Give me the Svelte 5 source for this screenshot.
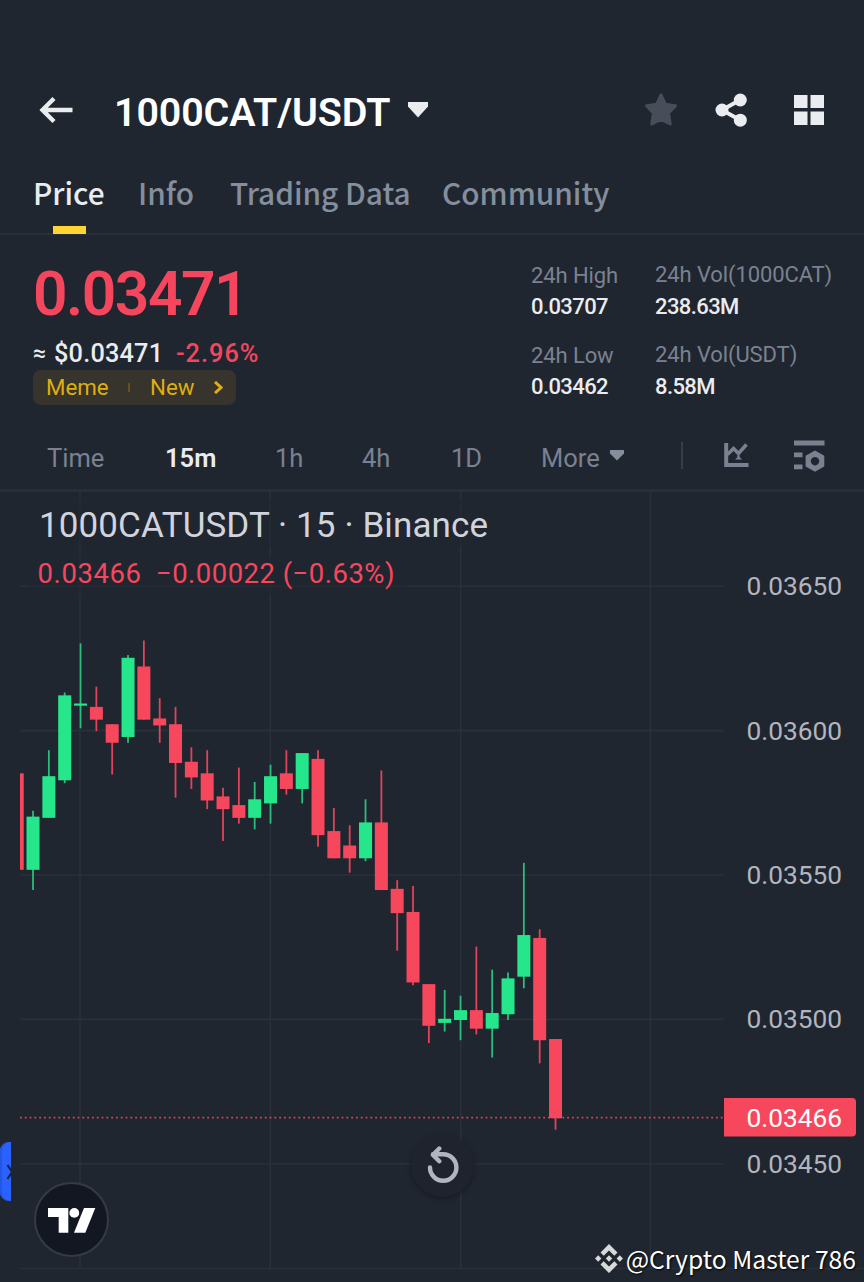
<script lang="ts">
  type Candle = [open: number, high: number, low: number, close: number]

  const tabs = ['Price', 'Info', 'Trading Data', 'Community']
  const intervals = ['Time', '15m', '1h', '4h', '1D']
  let activeTab = $state('Price')
  let activeInterval = $state('15m')

  const stats = [
    { label: '24h High', value: '0.03707' },
    { label: '24h Vol(1000CAT)', value: '238.63M' },
    { label: '24h Low', value: '0.03462' },
    { label: '24h Vol(USDT)', value: '8.58M' },
  ]

  // prices in units of 0.00001
  const candles: Candle[] = [
    [3585, 3585, 3552, 3552],
    [3552, 3572, 3545, 3570],
    [3570, 3593, 3570, 3584],
    [3583, 3613, 3582, 3612],
    [3609, 3630, 3601, 3609],
    [3608, 3615, 3600, 3604],
    [3602, 3602, 3585, 3596],
    [3598, 3626, 3596, 3625],
    [3622, 3631, 3604, 3604],
    [3604, 3611, 3596, 3602],
    [3602, 3608, 3577, 3589],
    [3589, 3594, 3580, 3584],
    [3585, 3593, 3573, 3576],
    [3577, 3580, 3562, 3573],
    [3574, 3587, 3568, 3570],
    [3570, 3582, 3566, 3576],
    [3575, 3588, 3568, 3584],
    [3585, 3593, 3578, 3580],
    [3580, 3592, 3575, 3592],
    [3590, 3593, 3560, 3564],
    [3565, 3573, 3556, 3556],
    [3560, 3567, 3551, 3556],
    [3556, 3576, 3555, 3568],
    [3568, 3586, 3545, 3545],
    [3545, 3548, 3524, 3537],
    [3537, 3546, 3512, 3513],
    [3512, 3512, 3492, 3498],
    [3499, 3510, 3496, 3500],
    [3500, 3508, 3493, 3503],
    [3503, 3525, 3495, 3497],
    [3497, 3517, 3487, 3502],
    [3502, 3516, 3500, 3514],
    [3515, 3554, 3511, 3529],
    [3528, 3531, 3485, 3493],
    [3493, 3493, 3462, 3466],
  ]
  const ticks = [3650, 3600, 3550, 3500, 3450]
  const verticals = [80, 270.3, 460.7, 650.5]
  const last = 3466

  const y = (p: number) => 94.2 + (3650 - p) * 2.888
  const fmt = (p: number) => (p / 100000).toFixed(5)

  const bars = candles.map(([open, high, low, close], i) => {
    const pad = open === close ? 1.1 : 0.6
    const top = y(Math.max(open, close)) - pad
    return {
      x: 17.2 + i * 15.833,
      up: close >= open,
      wickTop: y(high) - 0.6,
      wickBottom: y(low) + 0.6,
      top,
      height: y(Math.min(open, close)) + pad - top,
    }
  })
</script>

<div class="screen">
  <header>
    <button class="back" aria-label="Back">
      <svg width="36" height="30" viewBox="0 0 36 30" fill="none" stroke="#eaecef" stroke-width="4.4">
        <path d="M4 15H34.500M16 3.500L4.500 15L16 26.500" />
      </svg>
    </button>
    <h1>1000CAT/USDT</h1>
    <svg class="caret" width="20" height="16" viewBox="0 0 20 16" fill="#eaecef"><path d="M0 0H20V4.500L10 15.500L0 4.500Z" /></svg>
    <div class="actions">
      <svg width="34" height="36" viewBox="0 0 34 36" fill="#474d59" stroke="#474d59" stroke-width="3" stroke-linejoin="round">
        <path d="M17 3L21.400 12.300L31.500 13.700L24.600 21L26.200 32L17 27.500L7.800 32L9.400 21L2.500 13.700L12.600 12.300Z" />
      </svg>
      <svg width="34" height="36" viewBox="0 0 34 36" fill="#eaecef">
        <path d="M26 8L8 18L26 28" fill="none" stroke="#eaecef" stroke-width="4" />
        <circle cx="26.300" cy="8" r="6.500" /><circle cx="8" cy="18" r="6.500" /><circle cx="26.300" cy="28.200" r="6.500" />
      </svg>
      <svg width="30" height="30" viewBox="0 0 30 30" fill="#eaecef">
        <path d="M0 0H13.500V13H0ZM16.500 0H30V13H16.500ZM0 16.500H13.500V30H0ZM16.500 16.500H30V30H16.500Z" />
      </svg>
    </div>
  </header>

  <nav class="tabs">
    {#each tabs as tab}
      <button class:active={tab === activeTab} onclick={() => (activeTab = tab)}>{tab}</button>
    {/each}
  </nav>

  <section class="quote">
    <div class="quote-main">
      <div class="price">0.03471</div>
      <div class="fiat"><span class="approx">≈</span> <span class="usd">$0.03471</span> <span class="change">-2.96%</span></div>
      <div class="tags">
        <span class="meme">Meme</span>
        <i></i>
        <span>New</span>
        <svg width="9" height="13" viewBox="0 0 9 13" fill="none" stroke="#dfae10" stroke-width="3"><path d="M1 1L7 6.500L1 12" /></svg>
      </div>
    </div>
    <div class="stats">
      {#each stats as s}
        <div class="stat">
          <div class="label">{s.label}</div>
          <div class="value">{s.value}</div>
        </div>
      {/each}
    </div>
  </section>

  <div class="toolbar">
    {#each intervals as item}
      <button class:active={item === activeInterval} onclick={() => (activeInterval = item)}>{item}</button>
    {/each}
    <button class="more">
      More
      <svg width="14" height="11" viewBox="0 0 14 11" fill="#848e9c"><path d="M0 0H14V3.500L7 10.500L0 3.500Z" /></svg>
    </button>
    <i class="divider"></i>
    <svg class="indicator" width="25" height="26" viewBox="0 0 25 26" fill="none" stroke="#7a8190" stroke-width="4">
      <path d="M2.200 1V23H24.500" />
      <path d="M3.500 12.500L9.500 6.500L14.500 11.500L22.500 2.500" stroke-width="3.600" />
      <path d="M12.800 13.500H16.200L15.400 15L18.300 17.500H11L13.600 15Z" fill="#7a8190" stroke="none" />
    </svg>
    <svg class="settings" width="31" height="32" viewBox="0 0 31 32" fill="#7a8190">
      <path d="M0 .5H30.500V5.500H0ZM0 12.500H8.500V17.200H0ZM0 24.500H8.500V29.200H0Z" />
      <path fill-rule="evenodd" d="M21 10.500L30.300 15.800V26.500L21 31.700L11.600 26.500V15.800ZM21 17a4.200 4.200 0 1 0 .01 0Z" />
    </svg>
  </div>

  <main class="chart">
    <svg class="plot" width="864" height="790" viewBox="0 0 864 790">
      <g class="grid">
        {#each verticals as x}
          <path d="M{x} -3V776" />
        {/each}
        {#each ticks as t}
          <path d="M20 {y(t)}H724" />
        {/each}
        <path d="M20 776.500H864" />
      </g>
      <rect class="legend-bg" x="29" y="7" width="470" height="48" />
      <rect class="legend-bg" x="29" y="63" width="379" height="40" />

      <clipPath id="pane"><rect x="20" y="0" width="704" height="776" /></clipPath>
      <g clip-path="url(#pane)">
        {#each bars as b}
          <g class={b.up ? 'up' : 'down'}>
            <path d="M{b.x} {b.wickTop}V{b.wickBottom}" />
            <rect x={b.x - 6.5} y={b.top} width="13" height={b.height} />
          </g>
        {/each}
      </g>
      <path class="last-line" d="M20 {y(last)}H724" />

      <text class="symbol" x="39" y="45" textLength="449">1000CATUSDT · 15 · Binance</text>
      <text class="delta" x="37.500" y="90.500" textLength="103.500">0.03466</text>
      <text class="delta" x="156" y="90.500" textLength="238.500">−0.00022 (−0.63%)</text>

      {#each ticks as t}
        <text class="tick" x="746.500" y={y(t) + 9} textLength="95.500">{fmt(t)}</text>
      {/each}
      <path class="last-tag" d="M724 606H852a4 4 0 0 1 4 4V640.500a4 4 0 0 1 -4 4H724Z" />
      <text class="tick last" x="746.500" y={y(last) + 9} textLength="95.500">{fmt(last)}</text>
    </svg>

    <button class="drawer" aria-label="Open panel">
      <svg width="11" height="60" viewBox="0 0 11 60" fill="none">
        <path d="M7.500 23L12 30L7.500 37" stroke="#16213f" stroke-width="2" />
      </svg>
    </button>

    <div class="tv">
      <svg width="48" height="25" viewBox="0 0 48 25" fill="#fff">
        <path d="M0 0H20.300V24.700H10.700V9H0Z" /><circle cx="26.300" cy="4.900" r="4.900" /><path d="M36 0H47.300L37.300 24.700H26Z" />
      </svg>
    </div>

    <button class="reset" aria-label="Reset chart">
      <svg width="34" height="38" viewBox="0 0 34 38" fill="none" stroke="#b2b5be" stroke-width="4.400" stroke-linecap="round" stroke-linejoin="round">
        <path d="M4 21.500a13.200 13.200 0 1 0 13.200 -13.200H7" />
        <path d="M13.300 2.500L7 8.900L13.300 15.300" />
      </svg>
    </button>

    <div class="watermark">
      <svg width="28" height="29" viewBox="0 0 28 29" fill="#d8d9db">
        <path d="M14 0L22.500 8.500L19.300 11.700L14 6.400L8.700 11.700L5.500 8.500Z" />
        <path d="M14 29L22.500 20.500L19.300 17.300L14 22.600L8.700 17.300L5.500 20.500Z" />
        <path d="M14 11.300L17.200 14.500L14 17.700L10.800 14.500ZM3.200 11.300L6.400 14.500L3.200 17.700L0 14.500ZM24.800 11.300L28 14.500L24.800 17.700L21.600 14.500Z" />
      </svg>
      <span>@Crypto Master 786</span>
    </div>
  </main>
</div>

<style>
  :global(body) {
    background: #202630;
  }

  .screen {
    width: 864px;
    height: 1282px;
    overflow: hidden;
    box-sizing: border-box;
    padding-top: 72px;
    background: #202630;
    color: #eaecef;
    font-family: Roboto, 'Liberation Sans', sans-serif;
  }

  button {
    padding: 0;
    border: 0;
    background: none;
    color: inherit;
    font: inherit;
    text-align: left;
  }

  svg {
    display: block;
    flex: none;
  }

  header {
    display: flex;
    align-items: center;
    height: 76px;
    padding: 0 40px 0 38px;
  }

  .back {
    width: 76px;
  }

  h1 {
    width: 294px;
    margin: 0;
    padding-top: 5px;
    color: #fff;
    font-size: 39.4px;
    font-weight: 600;
    line-height: 46px;
    letter-spacing: -0.1px;
    white-space: nowrap;
  }

  .actions {
    display: flex;
    align-items: center;
    margin-left: auto;
  }

  .actions svg:nth-child(2) {
    margin: 0 46px 0 36px;
  }

  .tabs {
    display: grid;
    grid-template-columns: 105px 92px 212px auto;
    height: 85px;
    padding-left: 33px;
    border-bottom: 2px solid #2a3039;
  }

  .tabs button {
    position: relative;
    height: 85px;
    color: #848e9c;
    font-family: 'Noto Sans CJK SC', 'Noto Sans', sans-serif;
    font-size: 29.8px;
    font-weight: 500;
    line-height: 88px;
    letter-spacing: 0;
    white-space: nowrap;
  }

  .tabs .active {
    color: #eaecef;
  }

  .tabs .active::after {
    content: '';
    position: absolute;
    left: 20px;
    bottom: -1px;
    width: 33px;
    height: 8px;
    background: #fcd535;
  }

  .quote {
    display: flex;
    justify-content: space-between;
    height: 190px;
  }

  .quote-main {
    padding: 28px 0 0 33px;
  }

  .price {
    color: #f6465d;
    font-size: 60.5px;
    font-weight: 600;
    line-height: 64px;
    letter-spacing: -1.5px;
  }

  .fiat {
    display: flex;
    margin-top: 10px;
    font-size: 25.3px;
    font-weight: 500;
    line-height: 33px;
    letter-spacing: 0.2px;
  }

  .approx {
    width: 21px;
    font-size: 23px;
  }

  .usd {
    width: 122px;
  }

  .change {
    color: #f6465d;
    letter-spacing: 1px;
  }

  .tags {
    display: flex;
    align-items: center;
    box-sizing: border-box;
    width: 203px;
    height: 35px;
    padding: 0 13px 1px 13px;
    border-radius: 8px;
    background: #36342c;
    color: #dfae10;
    font-size: 22.3px;
  }

  .meme {
    width: 82px;
  }

  .tags i {
    width: 2px;
    height: 9px;
    margin-right: 20px;
    background: #62521f;
  }

  .tags svg {
    margin-left: auto;
  }

  .stats {
    display: grid;
    grid-template-columns: 124px 209px;
    grid-auto-rows: 62px;
    row-gap: 18px;
    padding-top: 25px;
    font-size: 22px;
    line-height: 31px;
    white-space: nowrap;
  }

  .stat:nth-child(even) .label {
    margin-top: -1px;
    margin-bottom: 1px;
  }

  .label {
    color: #7a8290;
    letter-spacing: -0.1px;
  }

  .value {
    font-weight: 500;
    letter-spacing: -0.6px;
  }

  .toolbar {
    display: grid;
    grid-template-columns: 118px 110px 87px 89px 90px 140px 43px 70px auto;
    align-items: center;
    height: 64px;
    padding-left: 47px;
    border-bottom: 3px solid #282e37;
    color: #7a8190;
    font-size: 25.5px;
    line-height: 32px;
  }

  .toolbar button {
    padding-top: 1px;
  }

  .toolbar .active {
    color: #eaecef;
    font-weight: 600;
  }

  .more {
    display: flex;
    align-items: center;
    gap: 10px;
  }

  .more svg {
    margin-top: -5px;
  }

  .divider {
    width: 2px;
    height: 27px;
    margin-top: -4px;
    background: #363d48;
  }

  .indicator {
    margin-top: -4px;
  }

  .settings {
    margin-top: -2px;
  }

  .chart {
    position: relative;
    height: 790px;
  }

  .plot {
    overflow: visible;
  }

  .grid path {
    stroke: #2a3039;
    stroke-width: 1.6;
  }

  .legend-bg {
    fill: #202630;
    opacity: 0.5;
  }

  .up path {
    stroke: #2bbd7b;
    stroke-width: 1.8;
  }

  .up rect {
    fill: #25e68b;
  }

  .down path {
    stroke: #e2435a;
    stroke-width: 1.8;
  }

  .down rect {
    fill: #f7475d;
  }

  .last-line {
    stroke: #f7475d;
    stroke-width: 1.8;
    stroke-dasharray: 1.8 3;
    opacity: 0.85;
  }

  .last-tag {
    fill: #f7475d;
  }

  .symbol {
    fill: #d1d4dc;
    font-size: 35px;
  }

  .delta {
    fill: #f7475d;
    font-size: 27.5px;
  }

  .tick {
    fill: #b2b5be;
    font-size: 26.3px;
  }

  .tick.last {
    fill: #fff;
  }

  .drawer {
    position: absolute;
    left: 0;
    top: 650px;
    width: 11px;
    height: 59px;
    overflow: hidden;
    box-sizing: border-box;
    border-radius: 9px 0 0 9px;
    background: #2962ff;
    box-shadow: inset 2px 0 0 #2456df;
  }

  .tv {
    position: absolute;
    left: 34px;
    top: 690px;
    display: flex;
    align-items: center;
    justify-content: center;
    box-sizing: border-box;
    width: 75px;
    height: 75px;
    border: 2.5px solid #363a45;
    border-radius: 50%;
    background: #131722;
  }

  .tv svg {
    margin-top: 1px;
  }

  .reset {
    position: absolute;
    left: 411px;
    top: 642px;
    display: flex;
    align-items: center;
    justify-content: center;
    width: 63px;
    height: 63px;
    border-radius: 50%;
    background: #1f232d;
    box-shadow: 0 2px 5px rgba(10, 12, 18, 0.45);
  }

  .reset svg {
    margin-top: -2px;
  }

  .watermark {
    position: absolute;
    right: 8px;
    bottom: 6px;
    display: flex;
    align-items: center;
    gap: 3px;
    color: #fff;
    font-family: 'Noto Sans CJK SC', 'Noto Sans', sans-serif;
    font-size: 24.7px;
    line-height: 36px;
    white-space: nowrap;
    text-shadow: 1px 1px 2px #000;
  }

  .watermark span {
    margin-top: -1px;
  }
</style>
